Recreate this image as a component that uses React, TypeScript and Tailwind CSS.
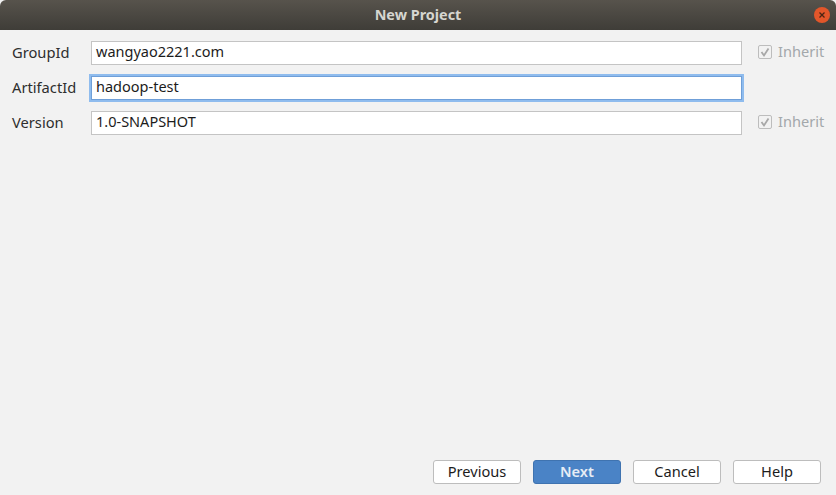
const font = "font-['Noto_Sans',sans-serif]";

function Inherit() {
	return (
		<div className="mb-[2px] flex items-center gap-[6px] text-[14.6px] text-[#a3a8ab]">
			<svg width="14" height="14" viewBox="0 0 14 14" fill="none">
				<rect x="0.5" y="0.5" width="13" height="13" rx="1.5" fill="#f2f2f2" stroke="#bdbdbd" />
				<path d="M3.5 7L6 10.5L10.5 3.5" stroke="#a8a8a8" strokeWidth="1.8" />
			</svg>
			<span>Inherit</span>
		</div>
	);
}

function Field({ label, value, focused, inherit }: { label: string; value: string; focused?: boolean; inherit?: boolean }) {
	return (
		<div className="flex h-6 items-center">
			<div className="mb-[2px] w-[79px] text-[14.7px] text-[#2e2e2e]">{label}</div>
			{focused ? (
				<div className="flex h-6 w-[651px] items-center border border-[#6f9fd8] bg-white pb-[2px] pl-1 text-[14.5px] text-[#1c1c1c] outline-2 outline-[#8fbcee]">
					{value}
				</div>
			) : (
				<div className="flex h-6 w-[651px] items-center border border-[#c4c4c4] bg-white pb-[2px] pl-1 text-[14.5px] text-[#1c1c1c]">
					{value}
				</div>
			)}
			{inherit && (
				<div className="ml-4">
					<Inherit />
				</div>
			)}
		</div>
	);
}

function Btn({ label, primary }: { label: string; primary?: boolean }) {
	return primary ? (
		<button className="h-6 w-[88px] rounded-[3px] border border-[#3f73b0] bg-[#4a83c6] pb-[2px] text-[14.6px] font-semibold text-[#e6edf5]">
			{label}
		</button>
	) : (
		<button className="h-6 w-[88px] rounded-[3px] border border-[#bdbdbd] bg-white pb-[2px] text-[14.6px] text-[#1c1c1c]">
			{label}
		</button>
	);
}

export default function App() {
	return (
		<div className={`flex h-[495px] w-[836px] flex-col overflow-hidden bg-[#f2f2f2] ${font}`}>
			{/* Title bar */}
			<div className="relative flex h-[30px] items-center justify-center rounded-t-[6px] bg-gradient-to-b from-[#57534c] to-[#3f3d38] pb-[1px] text-[14.4px] font-bold text-[#d6d6d0]">
				New Project
				<div className="absolute right-[6px] top-[7px] flex h-4 w-4 items-center justify-center rounded-full bg-[#e2562a]">
					<svg width="8" height="8" viewBox="0 0 8 8" fill="none">
						<path d="M1.5 1.5L6.5 6.5M6.5 1.5L1.5 6.5" stroke="#4a2413" strokeWidth="1.3" />
					</svg>
				</div>
			</div>

			{/* Form */}
			<div className="flex flex-col gap-[11px] pl-3 pt-[11px]">
				<Field label="GroupId" value="wangyao2221.com" inherit />
				<Field label="ArtifactId" value="hadoop-test" focused />
				<Field label="Version" value="1.0-SNAPSHOT" inherit />
			</div>

			{/* Buttons */}
			<div className="mt-auto flex justify-end gap-3 pb-[11px] pr-[15px]">
				<Btn label="Previous" />
				<Btn label="Next" primary />
				<Btn label="Cancel" />
				<Btn label="Help" />
			</div>
		</div>
	);
}
